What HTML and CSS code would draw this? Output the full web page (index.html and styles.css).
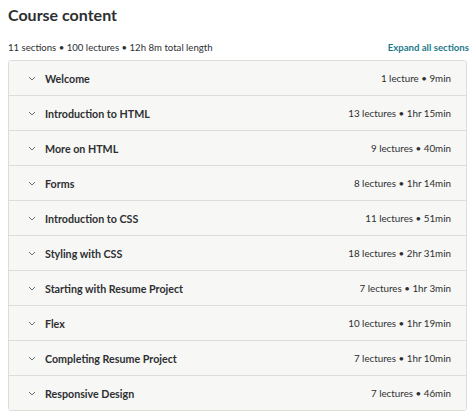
FILE: index.html
```html
<!DOCTYPE html>
<html>
<head>
<meta charset="utf-8">
<link rel="stylesheet" href="styles.css">
</head>
<body>
<div class="page">
  <h2 class="title">Course content</h2>
  <div class="meta">
    <span class="stats">11 sections • 100 lectures • 12h 8m total length</span>
    <span class="expand">Expand all sections</span>
  </div>
  <div class="list">
    <div class="row"><span class="chev"><svg width="8" height="5" viewBox="0 0 8 5"><path d="M1 1l3 3 3-3" fill="none" stroke="#6a6f73" stroke-width="1"/></svg></span><span class="name">Welcome</span><span class="info">1 lecture • 9min</span></div>
    <div class="row"><span class="chev"><svg width="8" height="5" viewBox="0 0 8 5"><path d="M1 1l3 3 3-3" fill="none" stroke="#6a6f73" stroke-width="1"/></svg></span><span class="name">Introduction to HTML</span><span class="info">13 lectures • 1hr 15min</span></div>
    <div class="row"><span class="chev"><svg width="8" height="5" viewBox="0 0 8 5"><path d="M1 1l3 3 3-3" fill="none" stroke="#6a6f73" stroke-width="1"/></svg></span><span class="name">More on HTML</span><span class="info">9 lectures • 40min</span></div>
    <div class="row"><span class="chev"><svg width="8" height="5" viewBox="0 0 8 5"><path d="M1 1l3 3 3-3" fill="none" stroke="#6a6f73" stroke-width="1"/></svg></span><span class="name">Forms</span><span class="info">8 lectures • 1hr 14min</span></div>
    <div class="row"><span class="chev"><svg width="8" height="5" viewBox="0 0 8 5"><path d="M1 1l3 3 3-3" fill="none" stroke="#6a6f73" stroke-width="1"/></svg></span><span class="name">Introduction to CSS</span><span class="info">11 lectures • 51min</span></div>
    <div class="row"><span class="chev"><svg width="8" height="5" viewBox="0 0 8 5"><path d="M1 1l3 3 3-3" fill="none" stroke="#6a6f73" stroke-width="1"/></svg></span><span class="name">Styling with CSS</span><span class="info">18 lectures • 2hr 31min</span></div>
    <div class="row"><span class="chev"><svg width="8" height="5" viewBox="0 0 8 5"><path d="M1 1l3 3 3-3" fill="none" stroke="#6a6f73" stroke-width="1"/></svg></span><span class="name">Starting with Resume Project</span><span class="info">7 lectures • 1hr 3min</span></div>
    <div class="row"><span class="chev"><svg width="8" height="5" viewBox="0 0 8 5"><path d="M1 1l3 3 3-3" fill="none" stroke="#6a6f73" stroke-width="1"/></svg></span><span class="name">Flex</span><span class="info">10 lectures • 1hr 19min</span></div>
    <div class="row"><span class="chev"><svg width="8" height="5" viewBox="0 0 8 5"><path d="M1 1l3 3 3-3" fill="none" stroke="#6a6f73" stroke-width="1"/></svg></span><span class="name">Completing Resume Project</span><span class="info">7 lectures • 1hr 10min</span></div>
    <div class="row"><span class="chev"><svg width="8" height="5" viewBox="0 0 8 5"><path d="M1 1l3 3 3-3" fill="none" stroke="#6a6f73" stroke-width="1"/></svg></span><span class="name">Responsive Design</span><span class="info">7 lectures • 46min</span></div>
  </div>
</div>
</body>
</html>
```
FILE: styles.css
```css
* { box-sizing: border-box; }
body {
  margin: 0;
  background: #ffffff;
  font-family: Lato, "Open Sans", sans-serif;
  color: #2d2f31;
}
.page {
  padding: 4px 7px 0 8px;
}
.title {
  margin: 0;
  font-size: 16px;
  font-weight: 700;
  line-height: 22px;
  color: #2d2f31;
}
.meta {
  display: flex;
  justify-content: space-between;
  align-items: center;
  margin-top: 15px;
  height: 13px;
  font-size: 9.6px;
}
.stats { color: #2d2f31; }
.expand {
  color: #1e7a8a;
  font-weight: 700;
  margin-right: -2px;
}
.list {
  margin-top: 6px;
  border: 1px solid #dcdcd8;
  border-radius: 3px;
  overflow: hidden;
}
.row {
  display: flex;
  align-items: center;
  height: 35px;
  background: #f7f7f5;
  border-top: 1px solid #dcdcd8;
  padding: 0 15px 0 19px;
}
.row:first-child { border-top: none; height: 34px; }
.chev {
  display: flex;
  width: 17px;
}
.name {
  font-size: 10.7px;
  font-weight: 700;
  color: #2d2f31;
  flex: 1;
}
.info {
  font-size: 9.8px;
  color: #2d2f31;
}
```
